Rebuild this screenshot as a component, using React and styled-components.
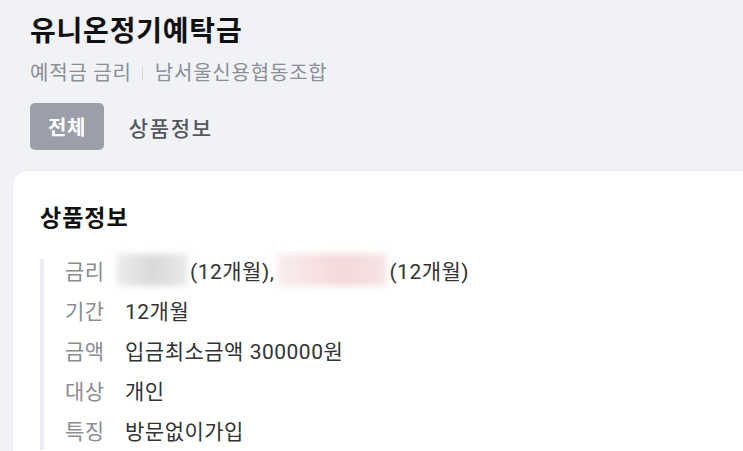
import React from "react";
import styled, { createGlobalStyle } from "styled-components";

const Global = createGlobalStyle`
  html, body { margin: 0; padding: 0; background: #f1f2f5; overflow: hidden; }
  body { font-family: Roboto, "Noto Sans CJK KR", sans-serif; }
`;

const Page = styled.div`
  width: 743px;
  height: 451px;
  overflow: hidden;
  background: #f1f2f5;
`;

const Header = styled.div`
  padding: 12px 0 0 30px;
`;

const Title = styled.h1`
  margin: 0;
  font-size: 28px;
  line-height: 40px;
  font-weight: 700;
  color: #111;
  letter-spacing: 0.8px;
`;

const Sub = styled.div`
  display: flex;
  align-items: center;
  margin-top: 2px;
  font-size: 20px;
  line-height: 38px;
  color: #8a8e96;
  letter-spacing: 0.8px;
`;

const Divider = styled.span`
  width: 1px;
  height: 15px;
  background: #d6d8dc;
  margin: 0 12px 0 10px;
`;

const Tabs = styled.div`
  display: flex;
  align-items: center;
  gap: 25px;
  margin-top: 11px;
`;

const Tab = styled.div`
  height: 47px;
  display: flex;
  align-items: center;
  justify-content: center;
  padding: ${(p) => (p.$active ? "0 18px" : "0")};
  border-radius: 5px;
  background: ${(p) => (p.$active ? "#9a9fa9" : "transparent")};
  color: ${(p) => (p.$active ? "#fff" : "#55585e")};
  font-size: ${(p) => (p.$active ? "20px" : "21px")};
  letter-spacing: ${(p) => (p.$active ? "0.5px" : "1.7px")};
  font-weight: ${(p) => (p.$active ? 700 : 500)};
`;

const Card = styled.div`
  margin: 21px -30px 0 13px;
  background: #fff;
  border-radius: 14px 14px 0 0;
  box-shadow: 0 -1px 3px rgba(0, 0, 0, 0.04);
  padding: 30px 0 0 27px;
  height: 300px;
`;

const CardTitle = styled.h2`
  margin: 0;
  font-size: 23px;
  line-height: 36px;
  font-weight: 700;
  color: #111;
  letter-spacing: 1px;
`;

const List = styled.div`
  margin-top: 22px;
  border-left: 4px solid #ecedf4;
  padding-left: 21px;
  display: flex;
  flex-direction: column;
`;

const Row = styled.div`
  display: flex;
  align-items: center;
  height: 40px;
  font-size: 21px;
  letter-spacing: 0.5px;
  &:first-child { margin-top: -9px; }
`;

const Label = styled.span`
  width: 60px;
  flex: none;
  color: #8a8d93;
`;

const Value = styled.span`
  display: flex;
  align-items: center;
  color: #333;
  white-space: nowrap;
`;

const Blur = styled.span`
  display: inline-block;
  width: ${(p) => p.$w}px;
  height: 32px;
  margin: 0 ${(p) => p.$mr}px 0 ${(p) => p.$ml}px;
  background: ${(p) => p.$bg};
  filter: blur(3px);
`;

export default function App() {
  return (
    <Page>
      <Global />
      <Header>
        <Title>유니온정기예탁금</Title>
        <Sub>
          예적금 금리
          <Divider />
          남서울신용협동조합
        </Sub>
        <Tabs>
          <Tab $active>전체</Tab>
          <Tab>상품정보</Tab>
        </Tabs>
      </Header>
      <Card>
        <CardTitle>상품정보</CardTitle>
        <List>
          <Row>
            <Label>금리</Label>
            <Value>
              <Blur $w={70} $ml={-8} $mr={3} $bg="linear-gradient(90deg,#ececec,#d9d9d9 50%,#e8e8e8)" />
              (12개월),
              <Blur $w={109} $ml={3} $mr={3} $bg="linear-gradient(90deg,#f9eeee,#f4d8d8 60%,#f7e4e4)" />
              (12개월)
            </Value>
          </Row>
          <Row>
            <Label>기간</Label>
            <Value>12개월</Value>
          </Row>
          <Row>
            <Label>금액</Label>
            <Value>입금최소금액 300000원</Value>
          </Row>
          <Row>
            <Label>대상</Label>
            <Value>개인</Value>
          </Row>
          <Row>
            <Label>특징</Label>
            <Value>방문없이가입</Value>
          </Row>
        </List>
      </Card>
    </Page>
  );
}
